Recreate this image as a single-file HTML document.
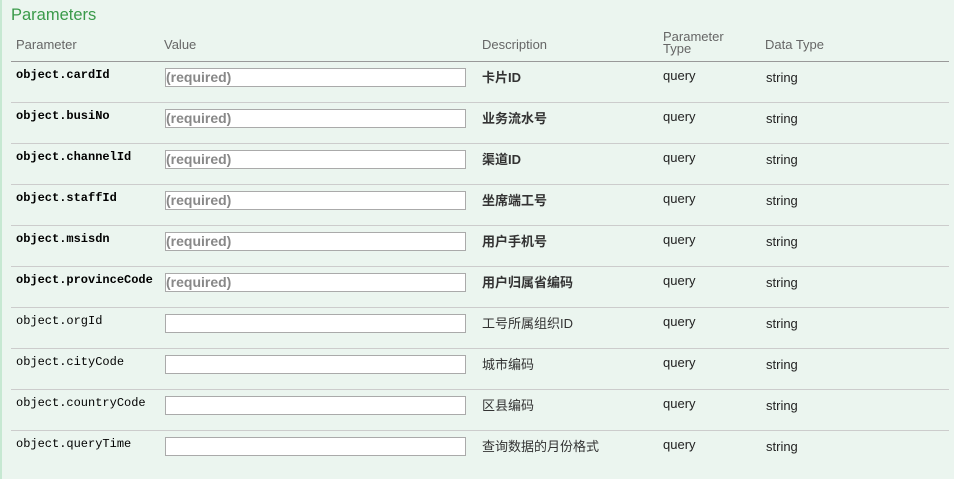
<!DOCTYPE html>
<html><head><meta charset="utf-8"><style>
html,body{margin:0;padding:0}
body{width:954px;height:479px;background:#ebf5ef;position:relative;overflow:hidden;font-family:"Liberation Sans","Noto Sans CJK SC",sans-serif;color:#333}
.lb{position:absolute;left:0;top:0;width:2px;height:479px;background:#c6e8d2}
.t{position:absolute;left:11px;top:6px;font-size:16.5px;color:#3a9a4a}
.h{position:absolute;font-size:13px;color:#666}
.hl{position:absolute;left:11px;width:938px;top:61px;height:1px;background:#999}
.row{position:absolute;left:11px;width:938px;height:41px}
.row .sep{position:absolute;left:0;right:0;bottom:0;height:1px;background:#ccc}
.p{position:absolute;left:5px;top:6px;font-family:"Liberation Mono","DejaVu Sans Mono",monospace;font-size:12px;color:#000}
.b{font-weight:bold}
.in{position:absolute;left:154px;top:6px;width:299px;height:17px;border:1px solid #aaa;background:#fff;font-size:14px;font-weight:bold;color:#888;line-height:17px;padding-left:0;box-sizing:content-box}
.d{position:absolute;left:471px;top:5px;font-size:13px;color:#333}
.q{position:absolute;left:652px;top:6px;font-size:13px;color:#222}
.s{position:absolute;left:755px;top:8px;font-size:13px;color:#222}
</style></head><body>
<div class="lb"></div>
<div class="t">Parameters</div>
<div class="h" style="left:16px;top:37px">Parameter</div>
<div class="h" style="left:164px;top:37px">Value</div>
<div class="h" style="left:482px;top:37px">Description</div>
<div class="h" style="left:663px;top:31px;line-height:12px">Parameter<br>Type</div>
<div class="h" style="left:765px;top:37px">Data Type</div>
<div class="hl"></div>

<div class="row" style="top:62px"><div class="p b">object.cardId</div><div class="in">(required)</div><div class="d b">卡片ID</div><div class="q">query</div><div class="s">string</div><div class="sep"></div></div>
<div class="row" style="top:103px"><div class="p b">object.busiNo</div><div class="in">(required)</div><div class="d b">业务流水号</div><div class="q">query</div><div class="s">string</div><div class="sep"></div></div>
<div class="row" style="top:144px"><div class="p b">object.channelId</div><div class="in">(required)</div><div class="d b">渠道ID</div><div class="q">query</div><div class="s">string</div><div class="sep"></div></div>
<div class="row" style="top:185px"><div class="p b">object.staffId</div><div class="in">(required)</div><div class="d b">坐席端工号</div><div class="q">query</div><div class="s">string</div><div class="sep"></div></div>
<div class="row" style="top:226px"><div class="p b">object.msisdn</div><div class="in">(required)</div><div class="d b">用户手机号</div><div class="q">query</div><div class="s">string</div><div class="sep"></div></div>
<div class="row" style="top:267px"><div class="p b">object.provinceCode</div><div class="in">(required)</div><div class="d b">用户归属省编码</div><div class="q">query</div><div class="s">string</div><div class="sep"></div></div>
<div class="row" style="top:308px"><div class="p">object.orgId</div><div class="in"></div><div class="d">工号所属组织ID</div><div class="q">query</div><div class="s">string</div><div class="sep"></div></div>
<div class="row" style="top:349px"><div class="p">object.cityCode</div><div class="in"></div><div class="d">城市编码</div><div class="q">query</div><div class="s">string</div><div class="sep"></div></div>
<div class="row" style="top:390px"><div class="p">object.countryCode</div><div class="in"></div><div class="d">区县编码</div><div class="q">query</div><div class="s">string</div><div class="sep"></div></div>
<div class="row" style="top:431px"><div class="p">object.queryTime</div><div class="in"></div><div class="d">查询数据的月份格式</div><div class="q">query</div><div class="s">string</div></div>
</body></html>
